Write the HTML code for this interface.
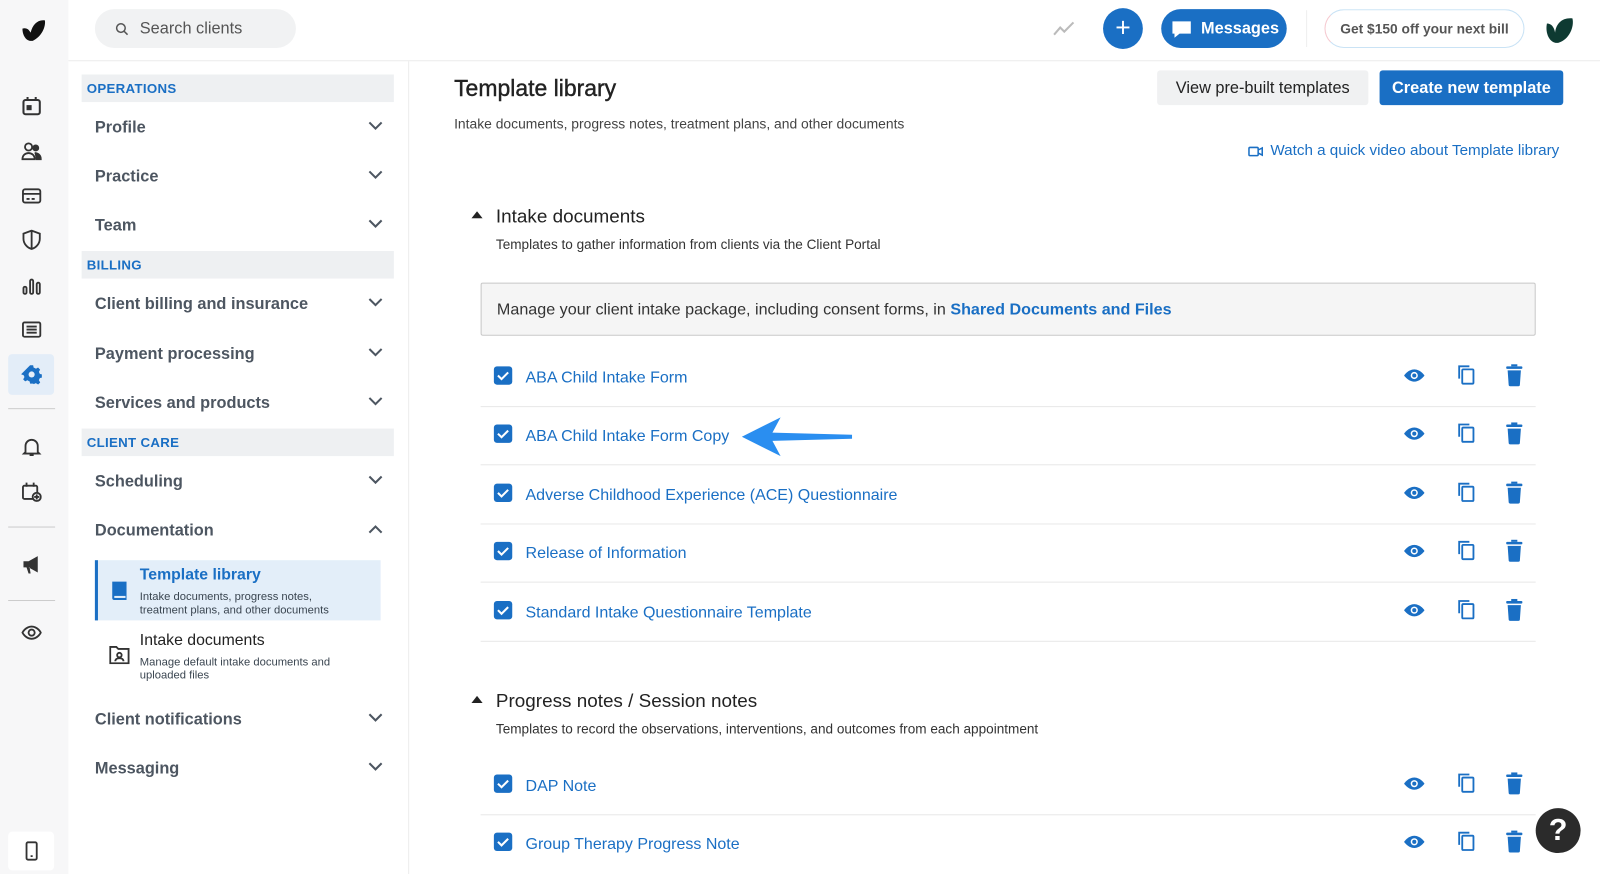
<!DOCTYPE html>
<html><head><meta charset="utf-8"><style>
*{box-sizing:border-box;margin:0;padding:0}
html,body{width:1600px;height:874px;overflow:hidden;background:#fff;font-family:"Liberation Sans",sans-serif}
#s{position:absolute;left:0;top:0;width:1568px;height:857px;transform:scale(1.0204);transform-origin:0 0}
.a{position:absolute}
.rail{left:0;top:0;width:67px;height:857px;background:#f7f7f8}
.ic{position:absolute;left:21px;width:20px;height:20px}
.hd{position:absolute;left:80px;width:306px;height:27px;background:#eef0f2;color:#1a6fc4;font-weight:bold;font-size:13px;line-height:27px;padding-left:5px;letter-spacing:.3px}
.it{position:absolute;left:93px;width:282px;font-size:16px;font-weight:bold;color:#4d5661}
.it svg{position:absolute;right:0;top:2px}
.row{position:absolute;left:471px;width:1034px;height:57px;border-bottom:1px solid #e8e8e8}
.row .cb{position:absolute;left:13px;top:-11px;width:18px;height:18px;background:#1a6fc4;border-radius:3px}
.row .t{position:absolute;left:44px;top:-8px;font-size:15.7px;color:#1a6fc4}
.row .i{position:absolute;top:-14px}
</style></head><body><div id="s">
<div class="a rail"></div>
<svg class="a" style="left:20px;top:18px" width="26" height="24" viewBox="0 0 26 24"><path d="M2 10c3-1 6 0 8 4C12 6 17 1 24 2c1 6-3 16-12 20C6 23 2 17 2 10z" fill="#111"/></svg>
<svg class="ic" style="top:94px" viewBox="0 0 20 20" fill="none" stroke="#333" stroke-width="2"><rect x="2" y="4" width="16" height="14" rx="2"/><path d="M6 1v4M14 1v4"/><rect x="6" y="10" width="3" height="3" fill="#333"/></svg>
<svg class="ic" style="top:138px" viewBox="0 0 20 20" fill="none" stroke="#333" stroke-width="1.8"><circle cx="7" cy="6" r="3.5"/><path d="M1 18c0-4 3-6 6-6s6 2 6 6z"/><circle cx="14" cy="7" r="2.5" fill="#333"/><path d="M13 12c3 0 6 2 6 6h-5" fill="#333"/></svg>
<svg class="ic" style="top:182px" viewBox="0 0 20 20" fill="none" stroke="#333" stroke-width="1.8"><rect x="1.5" y="3.5" width="17" height="13" rx="2"/><path d="M2 8h16M5 13h3M10 13h3"/></svg>
<svg class="ic" style="top:225px" viewBox="0 0 20 20" fill="none" stroke="#333" stroke-width="1.8"><path d="M10 1l8 3v5c0 5-4 9-8 10C6 18 2 14 2 9V4z M10 1v18"/></svg>
<svg class="ic" style="top:270px" viewBox="0 0 20 20" fill="none" stroke="#333" stroke-width="1.8"><rect x="2" y="11" width="3" height="7" rx="1.5"/><rect x="8.5" y="4" width="3" height="14" rx="1.5"/><rect x="15" y="7" width="3" height="11" rx="1.5"/></svg>
<svg class="ic" style="top:313px" viewBox="0 0 20 20" fill="none" stroke="#333" stroke-width="1.8"><rect x="1.5" y="3" width="17" height="14" rx="1.5"/><path d="M5 7h10M5 10h10M5 13h10"/></svg>
<div class="a" style="left:8px;top:347px;width:45px;height:40px;background:#e3edf8;border-radius:4px"></div>
<svg class="ic" style="top:357px" viewBox="0 0 20 20"><path d="M10 6.5a3.5 3.5 0 100 7 3.5 3.5 0 000-7zM8.5 1h3l.5 2.5 2 1 2.3-1.3 2 2-1.2 2.3 1 2 2.4.5v3l-2.4.5-1 2 1.3 2.3-2 2-2.3-1.3-2 1L11.5 19h-3L8 16.5l-2-1-2.3 1.3-2-2L3 12.5l-1-2L-.5 10" fill="#1a6fc4"/><circle cx="10" cy="10" r="7" fill="#1a6fc4"/><circle cx="10" cy="10" r="3" fill="#e3edf8"/></svg>
<div class="a" style="left:8px;top:400px;width:46px;height:1px;background:#ccc"></div>
<svg class="ic" style="top:428px" viewBox="0 0 20 20" fill="none" stroke="#333" stroke-width="1.8"><path d="M4 15V9a6 6 0 0112 0v6l1.5 1.5h-15zM8 18h4"/></svg>
<svg class="ic" style="top:472px" viewBox="0 0 20 20" fill="none" stroke="#333" stroke-width="1.8"><rect x="1.5" y="4" width="14" height="13" rx="1.5"/><path d="M5 1v4M12 1v4"/><circle cx="15" cy="15" r="4" fill="#f7f7f8"/><path d="M15 12.5v5M12.5 15h5"/></svg>
<div class="a" style="left:8px;top:516px;width:46px;height:1px;background:#ccc"></div>
<svg class="ic" style="top:543px" viewBox="0 0 20 20" fill="#333"><path d="M2 7h5l9-5v16l-9-5H2z M5 13l2 6h2l-1-6z"/></svg>
<div class="a" style="left:8px;top:588px;width:46px;height:1px;background:#ccc"></div>
<svg class="ic" style="top:610px" viewBox="0 0 20 20" fill="none" stroke="#333" stroke-width="1.8"><path d="M1 10s3-6 9-6 9 6 9 6-3 6-9 6-9-6-9-6z"/><circle cx="10" cy="10" r="3"/></svg>
<div class="a" style="left:8px;top:815px;width:45px;height:38px;background:#fff;border-radius:4px"></div>
<svg class="ic" style="top:824px" viewBox="0 0 20 20" fill="none" stroke="#333" stroke-width="1.8"><rect x="5" y="1.5" width="10" height="17" rx="1.5"/><path d="M9 15h2"/></svg>

<div class="a" style="left:67px;top:59px;width:1501px;height:1px;background:#ececec"></div>
<div class="a" style="left:93px;top:9px;width:197px;height:38px;background:#f1f2f3;border-radius:19px"></div>
<svg class="a" style="left:113px;top:22px" width="13" height="13" viewBox="0 0 13 13" fill="none" stroke="#555" stroke-width="1.5"><circle cx="5.5" cy="5.5" r="4.2"/><path d="M8.5 8.5l3.5 3.5"/></svg>
<div class="a" style="left:137px;top:20px;font-size:16px;color:#555">Search clients</div>
<svg class="a" style="left:1032px;top:20px" width="22" height="16" viewBox="0 0 22 16" fill="none" stroke="#bbb" stroke-width="2"><path d="M1 14l6-7 4 4 9-9"/></svg>
<div class="a" style="left:1081px;top:8px;width:39px;height:40px;border-radius:50%;background:#1a6fc4;color:#fff;font-size:26px;text-align:center;line-height:38px">+</div>
<div class="a" style="left:1138px;top:9px;width:123px;height:38px;border-radius:19px;background:#1a6fc4;color:#fff;font-weight:bold;font-size:16px;line-height:40px;padding-left:39px">Messages</div>
<svg class="a" style="left:1148px;top:19px" width="20" height="20" viewBox="0 0 20 20" fill="#fff"><path d="M1 2h18v12H8l-5 4v-4H1z"/></svg>
<div class="a" style="left:1280px;top:10px;width:1px;height:36px;background:#eee"></div>
<div class="a" style="left:1298px;top:9px;width:196px;height:38px;border-radius:19px;border:1px solid #c8e2f5;border-left-color:#f5c8cf;color:#555;font-size:13.5px;font-weight:bold;line-height:37px;text-align:center">Get $150 off your next bill</div>
<svg class="a" style="left:1512px;top:13px" width="32" height="31" viewBox="0 0 32 31"><path d="M4 10c4 0 7 3 8 9C13 10 19 4 29 5c2 8-3 21-14 24C7 30 2 20 4 10z" fill="#0e3a32"/></svg>

<div class="a" style="left:400px;top:60px;width:1px;height:797px;background:#ececec"></div>
<div class="hd" style="top:73px">OPERATIONS</div>
<div class="it" style="top:117px">Profile<svg width="14" height="9" viewBox="0 0 14 9" fill="none" stroke="#4d5661" stroke-width="2"><path d="M1 1l6 6 6-6"/></svg></div>
<div class="it" style="top:165px">Practice<svg width="14" height="9" viewBox="0 0 14 9" fill="none" stroke="#4d5661" stroke-width="2"><path d="M1 1l6 6 6-6"/></svg></div>
<div class="it" style="top:213px">Team<svg width="14" height="9" viewBox="0 0 14 9" fill="none" stroke="#4d5661" stroke-width="2"><path d="M1 1l6 6 6-6"/></svg></div>
<div class="hd" style="top:246px">BILLING</div>
<div class="it" style="top:290px">Client billing and insurance<svg width="14" height="9" viewBox="0 0 14 9" fill="none" stroke="#4d5661" stroke-width="2"><path d="M1 1l6 6 6-6"/></svg></div>
<div class="it" style="top:339px">Payment processing<svg width="14" height="9" viewBox="0 0 14 9" fill="none" stroke="#4d5661" stroke-width="2"><path d="M1 1l6 6 6-6"/></svg></div>
<div class="it" style="top:387px">Services and products<svg width="14" height="9" viewBox="0 0 14 9" fill="none" stroke="#4d5661" stroke-width="2"><path d="M1 1l6 6 6-6"/></svg></div>
<div class="hd" style="top:420px">CLIENT CARE</div>
<div class="it" style="top:464px">Scheduling<svg width="14" height="9" viewBox="0 0 14 9" fill="none" stroke="#4d5661" stroke-width="2"><path d="M1 1l6 6 6-6"/></svg></div>
<div class="it" style="top:512px">Documentation<svg width="14" height="9" viewBox="0 0 14 9" fill="none" stroke="#4d5661" stroke-width="2"><path d="M1 8l6-6 6 6"/></svg></div>
<div class="a" style="left:93px;top:549px;width:280px;height:59px;background:#e3eef9;border-left:3px solid #1a6fc4"></div>
<svg class="a" style="left:108px;top:569px" width="18" height="20" viewBox="0 0 18 20" fill="#1a6fc4"><path d="M2 1h14v18H4a2 2 0 01-2-2z"/><rect x="4" y="15" width="11" height="2" fill="#e3eef9"/></svg>
<div class="a" style="left:137px;top:555px;font-size:15.5px;font-weight:bold;color:#1a6fc4">Template library</div>
<div class="a" style="left:137px;top:579px;font-size:11px;color:#3a4550;line-height:13px">Intake documents, progress notes,<br>treatment plans, and other documents</div>
<svg class="a" style="left:107px;top:632px" width="20" height="19" viewBox="0 0 20 19" fill="none" stroke="#333" stroke-width="1.8"><path d="M1 2h6l2 2h10v14H1z"/><circle cx="10" cy="10" r="2.2"/><path d="M6 16c0-2 2-3 4-3s4 1 4 3"/></svg>
<div class="a" style="left:137px;top:619px;font-size:15.5px;color:#222">Intake documents</div>
<div class="a" style="left:137px;top:643px;font-size:11px;color:#3a4550;line-height:13px">Manage default intake documents and<br>uploaded files</div>
<div class="it" style="top:697px">Client notifications<svg width="14" height="9" viewBox="0 0 14 9" fill="none" stroke="#4d5661" stroke-width="2"><path d="M1 1l6 6 6-6"/></svg></div>
<div class="it" style="top:745px">Messaging<svg width="14" height="9" viewBox="0 0 14 9" fill="none" stroke="#4d5661" stroke-width="2"><path d="M1 1l6 6 6-6"/></svg></div>

<div class="a" style="left:445px;top:74px;font-size:22.5px;color:#222;-webkit-text-stroke:0.4px #222">Template library</div>
<div class="a" style="left:445px;top:114px;font-size:13.6px;color:#444">Intake documents, progress notes, treatment plans, and other documents</div>
<div class="a" style="left:1134px;top:69px;width:207px;height:34px;background:#f0f1f2;border-radius:3px;font-size:16px;color:#222;text-align:center;line-height:35px">View pre-built templates</div>
<div class="a" style="left:1352px;top:69px;width:180px;height:34px;background:#1a6fc4;border-radius:3px;font-size:16px;font-weight:bold;color:#fff;text-align:center;line-height:35px">Create new template</div>
<svg class="a" style="left:1223px;top:143px" width="15" height="11" viewBox="0 0 15 11" fill="none" stroke="#1a6fc4" stroke-width="1.5"><rect x="1" y="1.5" width="9" height="8" rx="1"/><path d="M10 4l4-2v7l-4-2"/></svg>
<div class="a" style="left:1245px;top:140px;font-size:14.9px;color:#1a6fc4">Watch a quick video about Template library</div>

<svg class="a" style="left:462px;top:207px" width="11" height="7"><path d="M0 7L5.5 0 11 7z" fill="#222"/></svg>
<div class="a" style="left:486px;top:201px;font-size:18.5px;color:#222">Intake documents</div>
<div class="a" style="left:486px;top:232px;font-size:13.3px;color:#333">Templates to gather information from clients via the Client Portal</div>
<div class="a" style="left:471px;top:277px;width:1034px;height:52px;background:#f5f5f5;border:1px solid #c8c8c8;border-radius:2px;font-size:15.8px;color:#333;line-height:51px;padding-left:15px">Manage your client intake package, including consent forms, in <b style="color:#1a6fc4">Shared Documents and Files</b></div>

<div id="rows"></div>
<svg class="a" style="left:727px;top:408px" width="110" height="40" viewBox="0 0 110 40"><path d="M0 20L38 1 30 16 108 18 108 22 30 24 38 39z" fill="#2a8ef0"/></svg>

<svg class="a" style="left:462px;top:682px" width="11" height="7"><path d="M0 7L5.5 0 11 7z" fill="#222"/></svg>
<div class="a" style="left:486px;top:676px;font-size:18.5px;color:#222">Progress notes / Session notes</div>
<div class="a" style="left:486px;top:707px;font-size:13.3px;color:#333">Templates to record the observations, interventions, and outcomes from each appointment</div>

<div class="a" style="left:1505px;top:792px;width:44px;height:44px;border-radius:50%;background:#2b2b2b;color:#fff;font-size:30px;font-weight:bold;text-align:center;line-height:44px">?</div>
</div>
<script>
var rows=[[370,"ABA Child Intake Form"],[427,"ABA Child Intake Form Copy"],[485,"Adverse Childhood Experience (ACE) Questionnaire"],[542,"Release of Information"],[600,"Standard Intake Questionnaire Template"],[770,"DAP Note"],[827,"Group Therapy Progress Note"]];
var h="";
var ck='<svg width="18" height="18" viewBox="0 0 18 18"><path d="M4 9l3.5 3.5L14 6" fill="none" stroke="#fff" stroke-width="2"/></svg>';
var eye='<svg class="i" style="left:905px" width="20" height="24" viewBox="0 0 20 24"><path d="M0 12s4-6 10-6 10 6 10 6-4 6-10 6S0 12 0 12z" fill="#1a6fc4"/><circle cx="10" cy="12" r="3.5" fill="#fff"/><circle cx="10" cy="12" r="2" fill="#1a6fc4"/></svg>';
var cp='<svg class="i" style="left:957px" width="18" height="24" viewBox="0 0 18 24" fill="none" stroke="#1a6fc4" stroke-width="1.8"><path d="M2 15V3h10"/><rect x="5" y="6" width="11" height="14" rx="1"/></svg>';
var tr='<svg class="i" style="left:1005px" width="16" height="24" viewBox="0 0 16 24" fill="#1a6fc4"><rect x="0" y="3" width="16" height="2.5" rx="1"/><rect x="5" y="1" width="6" height="2"/><path d="M1.5 7h13l-1 14a1.5 1.5 0 01-1.5 1.5H4A1.5 1.5 0 012.5 21z"/></svg>';
rows.forEach(function(r,k){h+='<div class="row" style="top:'+(r[0]-28)+'px;'+(k==6?'border-bottom:none':'')+'"><div style="position:absolute;top:28px;left:0;right:0"><div class="cb">'+ck+'</div><div class="t">'+r[1]+'</div>'+eye+cp+tr+'</div></div>';});
document.getElementById("rows").outerHTML=h;
</script>
</body></html>
